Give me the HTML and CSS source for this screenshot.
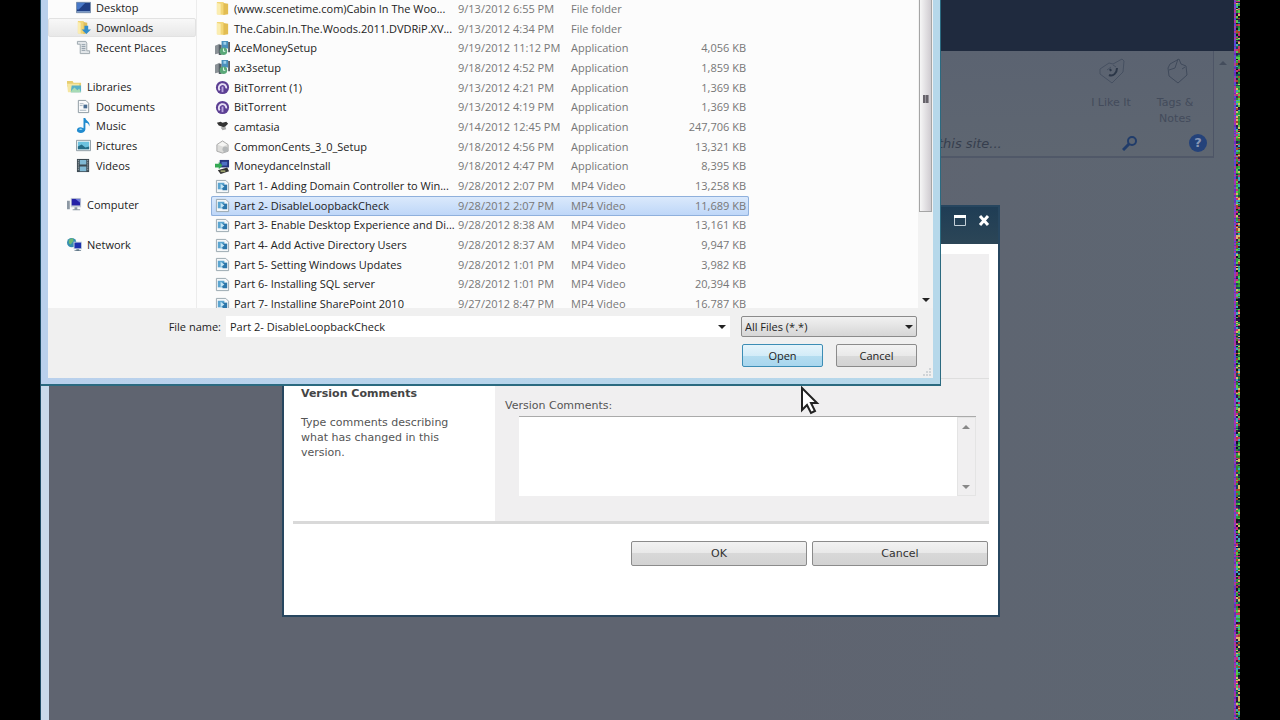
FILE: index.html
```html
<!DOCTYPE html>
<html lang="en">
<head>
  <meta charset="utf-8">
  <title>Upload Document</title>
  <link rel="stylesheet" href="styles.css">
</head>
<body>
  <svg class="sprites" aria-hidden="true">
    <symbol id="i-folder" viewBox="0 0 16 16"><path fill="#f3d778" d="M2 1h7l1 2v12l-8-1z"/><path fill="#e2bd52" d="M9 2l5 1v11l-5 1z"/><path fill="#fbedb0" d="M2 2l4 1v12l-4-1z"/></symbol>
    <symbol id="i-installer" viewBox="0 0 16 16"><path fill="#8a9196" d="M0 5l5-2v10l-5 1z"/><path fill="#4a90bd" d="M7 0h7v8H7z"/><path fill="#9fd0ea" d="M9 1h3v3H9z"/><path fill="#555e66" d="M4 4h3v11H4zM14 1h2v11h-2z"/><circle cx="9" cy="11" r="4" fill="#5aa878"/><path fill="none" stroke="#e8fff0" d="M9 8v3h2"/></symbol>
    <symbol id="i-bittorrent" viewBox="0 0 16 16"><circle cx="8" cy="8" r="7" fill="#5c3f93"/><path fill="none" stroke="#e6def4" stroke-width="2" d="M12 9a4 4 0 1 0-7 2"/><path fill="none" stroke="#b9a6dc" stroke-width="2" d="M8 7v6"/></symbol>
    <symbol id="i-camtasia" viewBox="0 0 16 16"><path fill="#333" d="M2 4l4-1 2 1 4-1 2 2-2 2-2 2-3-1-3-1z"/><path fill="#aaa" d="M6 9l5-1 1 3-4 1z"/></symbol>
    <symbol id="i-box" viewBox="0 0 16 16"><path fill="#dcdcda" stroke="#a9a9a7" d="M2 6l6-4 6 4v7l-6 2-6-2z"/><path fill="#f5f5f3" d="M3 6l5-3 5 3-5 2z"/><circle cx="11" cy="11" r="3" fill="#b5b8b9"/></symbol>
    <symbol id="i-money" viewBox="0 0 16 16"><path fill="#26367e" d="M5 1h10v8H5z"/><path fill="#4d70c4" d="M7 3h6v4H7z"/><path fill="#333" d="M3 12l10-3 2 4-9 3z"/><path fill="#34a853" d="M0 5h4V3l4 4-4 4V9H0z"/><path fill="#9ba16d" d="M6 12h5v2H6z"/></symbol>
    <symbol id="i-video" viewBox="0 0 16 16"><path fill="#f4f7f9" stroke="#98a5ae" d="M1.500 1.500h10l3 3v10h-13z"/><path fill="#5ba5d0" d="M3 4h7v7H3z"/><path fill="#2c76aa" d="M8 6h5v6H8z"/><path fill="#c5e5f4" d="M6 5l4 3-4 3z"/></symbol>
    <symbol id="i-desktop" viewBox="0 0 16 16"><path fill="#1f3f86" stroke="#7d92ad" d="M.5 2.500h15v11H.5z"/><path fill="#4778c8" d="M1 3h9L3 10H1z"/><path fill="#9bb9dd" d="M1 12h14v1H1z"/></symbol>
    <symbol id="i-downloads" viewBox="0 0 16 16"><path fill="#f1d676" d="M2 1h6l1 2v12l-7-1z"/><path fill="#dfbe5c" d="M8 2l4 1v11l-4 1z"/><path fill="#fbedb0" d="M2 2l3 1v12l-3-1z"/><path fill="#328ecb" d="M9 6h4v4h3l-5 5-5-5h3z"/></symbol>
    <symbol id="i-recent" viewBox="0 0 16 16"><path fill="#e2e6e9" stroke="#9ba5ac" d="M1.500 1.500h9l1 2v8h3v3h-10v-10h-3z"/><path stroke="#8b99a3" d="M6 5h4M6 7h4M6 9h4M6 11h4"/></symbol>
    <symbol id="i-libraries" viewBox="0 0 16 16"><path fill="#e7ce71" d="M0 2h6l1 2h8v4H0z"/><path fill="#f5e6a2" d="M0 5h13v9H1z"/><path fill="#58b0c8" d="M5 7h10v7H4z"/><path fill="#a7dbb5" d="M5 12l3-3 3 3 2-2 2 4H4z"/></symbol>
    <symbol id="i-documents" viewBox="0 0 16 16"><path fill="#fafbfc" stroke="#8b979f" d="M2.500 1.500h8l3 3v10h-11z"/><path stroke="#a4b4c0" d="M4 5h4M4 7h3M4 12h7"/><path fill="#4a6e93" d="M8 6h4v4H8z"/></symbol>
    <symbol id="i-music" viewBox="0 0 16 16"><path fill="#218bcf" d="M8 0h2c0 3 6 4 4 9 0-3-2-4-4-4v7c0 5-9 5-9 1 0-3 4-4 7-2z"/><path fill="#9bd7f5" d="M3 12c1-1 3-1 4 0-1 1-3 1-4 0z"/></symbol>
    <symbol id="i-pictures" viewBox="0 0 16 16"><path fill="#eef2f3" stroke="#8b9aa2" d="M.5 2.500h15v11H.5z"/><path fill="#6cc2df" d="M2 4h12v8H2z"/><path fill="#256c86" d="M2 9l4-2 4 3 4-1v3H2z"/></symbol>
    <symbol id="i-videos" viewBox="0 0 16 16"><path fill="#3d4a52" d="M1 1h13v14H1z"/><path fill="#80b9d4" d="M4 2h7v5H4zM4 9h7v5H4z"/><path stroke="#bec8ce" stroke-dasharray="1 1" d="M2.500 2v12M12.500 2v12"/></symbol>
    <symbol id="i-computer" viewBox="0 0 16 16"><path fill="#c7ced6" d="M4 1h11v10H4z"/><path fill="#2521a6" d="M5 2h9v7H5z"/><path fill="#6d78d6" d="M9 2h5v4z"/><path fill="#8d98a4" d="M0 4h3v9H0zM8 11h3v2h3v1H6v-1h2z"/></symbol>
    <symbol id="i-network" viewBox="0 0 16 16"><circle cx="5" cy="6" r="5" fill="#358eb2"/><path fill="#6eb974" d="M2 3l4-2 1 3-3 4-2-1z"/><path fill="#c2d0df" d="M7 5h9v8H7z"/><path fill="#1d31ae" d="M8 6h7v6H8z"/><path fill="#627889" d="M10 13h3v1h2v1H8v-1h2z"/></symbol>
  </svg>

  <div class="screen">
    <!-- SharePoint page, dimmed by the modal overlay -->
    <div class="site">
      <div class="site-top"></div>
      <div class="ribbon">
        <div class="ribbon-main">
          <div class="ribbon-actions">
            <button class="ribbon-button">
              <svg width="32" height="32" viewBox="0 0 32 32" fill="none" stroke="#465061"><path d="M5 14l9-6 4 1 9-5 2 2-1 11-11 11L5 19z"/><path d="M12 15l4-3M18 10l3 2"/><path stroke="#2c3748" stroke-width="2" d="M14 20c4 2 8-2 8-7M15 14l1 2"/></svg>
              I Like It
            </button>
            <button class="ribbon-button">
              <svg width="32" height="32" viewBox="0 0 32 32" fill="none" stroke="#404a5b"><path d="M9 13l2-4 9-5 2 5 5 2 1 9-9 8-9-7z"/><path d="M19 4l-3 9-6 2M26 12l-3 2"/></svg>
              Tags &amp; Notes
            </button>
          </div>
          <div class="site-search">
            <span class="search-text">this site...</span>
            <button class="search-go" aria-label="Search"><svg width="16" height="16" viewBox="0 0 16 16" fill="none" stroke="#203c6a" stroke-width="2"><circle cx="10" cy="6" r="4"/><path stroke-width="3" d="M7 9l-6 6"/></svg></button>
            <a class="help" href="#" aria-label="Help">?</a>
          </div>
        </div>
        <span class="page-up"></span>
      </div>
    </div>
    <canvas class="noise" id="noise" width="6" height="720"></canvas>

    <section class="upload">
      <header class="upload-title">
        <button aria-label="Maximize"><svg width="14" height="14" viewBox="0 0 14 14"><path fill="none" stroke="#c4d0d8" d="M1.500 1.500h11v10h-11z"/><path fill="#fff" d="M1 1h12v3H1z"/></svg></button>
        <button aria-label="Close"><svg width="14" height="14" viewBox="0 0 14 14"><path stroke="#fff" stroke-width="3" d="M3 2l8 9M11 2l-8 9"/></svg></button>
      </header>
      <div class="upload-body">
        <div class="form-row form-row-file"><div></div><div class="form-field"></div></div>
        <div class="form-row">
          <div class="form-help">
            <h3>Version Comments</h3>
            <p>Type comments describing what has changed in this version.</p>
          </div>
          <div class="form-field">
            <label for="comments">Version Comments:</label>
            <div class="comments-box">
              <textarea id="comments"></textarea>
              <div class="comments-scroll"><i class="arrow-up"></i><i class="arrow-down"></i></div>
            </div>
          </div>
        </div>
        <div class="upload-buttons">
          <button class="wide-button">OK</button>
          <button class="wide-button">Cancel</button>
        </div>
      </div>
    </section>

    <section class="file-dialog">
      <div class="dialog-inner">
        <div class="panes">
          <ul class="tree">
            <li class="sub"><svg><use href="#i-desktop"/></svg>Desktop</li>
            <li class="sub current"><svg><use href="#i-downloads"/></svg>Downloads</li>
            <li class="sub"><svg><use href="#i-recent"/></svg>Recent Places</li>
            <li></li>
            <li><svg><use href="#i-libraries"/></svg>Libraries</li>
            <li class="sub"><svg><use href="#i-documents"/></svg>Documents</li>
            <li class="sub"><svg><use href="#i-music"/></svg>Music</li>
            <li class="sub"><svg><use href="#i-pictures"/></svg>Pictures</li>
            <li class="sub"><svg><use href="#i-videos"/></svg>Videos</li>
            <li></li>
            <li><svg><use href="#i-computer"/></svg>Computer</li>
            <li></li>
            <li><svg><use href="#i-network"/></svg>Network</li>
          </ul>
          <div class="files">
            <table>
              <colgroup><col class="c-icon"><col class="c-name"><col class="c-date"><col class="c-type"><col class="c-size"></colgroup>
              <tbody>
                <tr><td><svg><use href="#i-folder"/></svg></td><td>(www.scenetime.com)Cabin In The Woo...</td><td>9/13/2012 6:55 PM</td><td>File folder</td><td></td></tr>
                <tr><td><svg><use href="#i-folder"/></svg></td><td>The.Cabin.In.The.Woods.2011.DVDRiP.XV...</td><td>9/13/2012 4:34 PM</td><td>File folder</td><td></td></tr>
                <tr><td><svg><use href="#i-installer"/></svg></td><td>AceMoneySetup</td><td>9/19/2012 11:12 PM</td><td>Application</td><td>4,056 KB</td></tr>
                <tr><td><svg><use href="#i-installer"/></svg></td><td>ax3setup</td><td>9/18/2012 4:52 PM</td><td>Application</td><td>1,859 KB</td></tr>
                <tr><td><svg><use href="#i-bittorrent"/></svg></td><td>BitTorrent (1)</td><td>9/13/2012 4:21 PM</td><td>Application</td><td>1,369 KB</td></tr>
                <tr><td><svg><use href="#i-bittorrent"/></svg></td><td>BitTorrent</td><td>9/13/2012 4:19 PM</td><td>Application</td><td>1,369 KB</td></tr>
                <tr><td><svg><use href="#i-camtasia"/></svg></td><td>camtasia</td><td>9/14/2012 12:45 PM</td><td>Application</td><td>247,706 KB</td></tr>
                <tr><td><svg><use href="#i-box"/></svg></td><td>CommonCents_3_0_Setup</td><td>9/18/2012 4:56 PM</td><td>Application</td><td>13,321 KB</td></tr>
                <tr><td><svg><use href="#i-money"/></svg></td><td>MoneydanceInstall</td><td>9/18/2012 4:47 PM</td><td>Application</td><td>8,395 KB</td></tr>
                <tr><td><svg><use href="#i-video"/></svg></td><td>Part 1- Adding Domain Controller to Win...</td><td>9/28/2012 2:07 PM</td><td>MP4 Video</td><td>13,258 KB</td></tr>
                <tr class="selected"><td><svg><use href="#i-video"/></svg></td><td>Part 2- DisableLoopbackCheck</td><td>9/28/2012 2:07 PM</td><td>MP4 Video</td><td>11,689 KB</td></tr>
                <tr><td><svg><use href="#i-video"/></svg></td><td>Part 3- Enable Desktop Experience and Di...</td><td>9/28/2012 8:38 AM</td><td>MP4 Video</td><td>13,161 KB</td></tr>
                <tr><td><svg><use href="#i-video"/></svg></td><td>Part 4- Add Active Directory Users</td><td>9/28/2012 8:37 AM</td><td>MP4 Video</td><td>9,947 KB</td></tr>
                <tr><td><svg><use href="#i-video"/></svg></td><td>Part 5- Setting Windows Updates</td><td>9/28/2012 1:01 PM</td><td>MP4 Video</td><td>3,982 KB</td></tr>
                <tr><td><svg><use href="#i-video"/></svg></td><td>Part 6- Installing SQL server</td><td>9/28/2012 1:01 PM</td><td>MP4 Video</td><td>20,394 KB</td></tr>
                <tr><td><svg><use href="#i-video"/></svg></td><td>Part 7- Installing SharePoint 2010</td><td>9/27/2012 8:47 PM</td><td>MP4 Video</td><td>16,787 KB</td></tr>
              </tbody>
            </table>
          </div>
          <div class="scrollbar"><div class="thumb"><i></i></div><i class="arrow-down"></i></div>
        </div>
        <div class="dialog-footer">
          <div class="footer-row">
            <label for="filename">File name:</label>
            <div class="filename-box">
              <input type="text" id="filename" value="Part 2- DisableLoopbackCheck">
              <i class="arrow-down"></i>
            </div>
            <div class="filter-box">
              <select aria-label="File type"><option>All Files (*.*)</option></select>
              <i class="arrow-down"></i>
            </div>
          </div>
          <div class="footer-row footer-buttons">
            <button class="dialog-button default">Open</button>
            <button class="dialog-button">Cancel</button>
          </div>
        </div>
        <svg class="grip" width="10" height="10" viewBox="0 0 10 10" fill="#d0d4d7"><path d="M7 1h2v2H7zM7 4h2v2H7zM7 7h2v2H7zM4 4h2v2H4zM4 7h2v2H4zM1 7h2v2H1z"/></svg>
      </div>
    </section>

    <svg class="cursor" width="20" height="30" viewBox="0 0 20 30"><path fill="#fff" stroke="#222" stroke-width="2" d="M2 2v22l5-5 4 8 4-2-4-8h6z"/></svg>
  </div>

  <script>
    // static on the right edge of the capture
    var canvas = document.getElementById('noise');
    var ctx = canvas.getContext('2d');
    var edge = ['#6a30c0', '#a030b8', '#5a48d8', '#b03898', '#8040c8'];
    var colors = ['#2fa040', '#101820', '#58c848', '#c83070', '#184858', '#d8b868', '#30882a', '#301848', '#38a8b8', '#a84828'];
    var seed = 7;
    function next(n) {
      seed = (seed * 1103 + 12347) % 65521;
      return Math.floor(seed / 65521 * n);
    }
    for (var y = 0; y < 720; y += 1 + next(2)) {
      for (var x = 0; x < 6; x += 2) {
        ctx.fillStyle = x < 2 ? edge[next(edge.length)] : colors[next(colors.length)];
        ctx.fillRect(x, y, 2, 2);
      }
    }
  </script>
</body>
</html>
```
FILE: styles.css
```css
* {
  box-sizing: border-box;
}

body {
  margin: 0;
  background: #000;
  font-family: "Open Sans", "Noto Sans", sans-serif;
  font-size: 11px;
  color: #222;
}

button, input, select, textarea {
  font: inherit;
  color: inherit;
  margin: 0;
}

button {
  padding: 0;
}

.sprites {
  display: none;
}

.screen {
  position: relative;
  height: 100vh;
  margin: 0 40px;
  overflow: hidden;
  display: flex;
  border-left: 1px solid #1d4a63;
}

/* dimmed site */
.site {
  flex: 1;
  border-left: 8px solid #c9d9ea;
  background: linear-gradient(90deg, #5f6470 60%, #5d6672);
}

.site-top {
  height: 51px;
  background: #1f2a3e;
}

.ribbon {
  display: flex;
  font-family: "DejaVu Sans", sans-serif;
  color: #434b5b;
}

.ribbon-main {
  flex: 1;
  height: 107px;
  display: flex;
  flex-direction: column;
  justify-content: space-between;
  background: linear-gradient(#5b6371, #5e6671);
  border-right: 1px solid #4d5566;
  border-bottom: 2px solid #505868;
}

.ribbon-actions {
  display: flex;
  justify-content: flex-end;
  align-items: flex-start;
  gap: 12px;
  padding: 4px 12px 0 0;
}

.ribbon-button {
  width: 52px;
  display: flex;
  flex-direction: column;
  align-items: center;
  gap: 8px;
  border: 0;
  background: none;
  line-height: 16px;
}

.site-search {
  display: flex;
  justify-content: flex-end;
  align-items: center;
  padding: 0 6px 4px 0;
}

.search-text {
  width: 184px;
  font-size: 13px;
  font-style: italic;
  color: #363e4d;
}

.search-go {
  height: 16px;
  border: 0;
  background: none;
}

.help {
  width: 18px;
  height: 18px;
  margin-left: 51px;
  border-radius: 50%;
  background: #24427a;
  color: #8796b4;
  font-size: 13px;
  font-weight: bold;
  line-height: 18px;
  text-align: center;
  text-decoration: none;
}

.page-up {
  width: 20px;
  padding: 10px 5px;
}

.page-up::before {
  content: "";
  display: block;
  width: 0;
  border: 4px solid transparent;
  border-top: 0;
  border-bottom-color: #444d5c;
}

.noise {
  flex: none;
}

/* arrows */
.arrow-up, .arrow-down {
  width: 0;
  border: 4px solid transparent;
}

.arrow-up {
  border-top: 0;
  border-bottom-color: #888;
}

.arrow-down {
  border-bottom: 0;
  border-top-color: #222;
}

/* upload document modal */
.upload {
  position: absolute;
  left: 241px;
  top: 205px;
  width: 718px;
  height: 412px;
  border: 2px solid #27465f;
  background: #fff;
  font-family: "DejaVu Sans", sans-serif;
  color: #555;
}

.upload-title {
  height: 37px;
  display: flex;
  justify-content: flex-end;
  align-items: center;
  gap: 10px;
  padding: 0 7px 10px 0;
  background: linear-gradient(#1f3d55, #2c4657);
}

.upload-title button {
  height: 14px;
  border: 0;
  background: none;
}

.upload-body {
  padding: 10px 9px;
}

.form-row {
  display: grid;
  grid-template-columns: 202px 1fr;
  height: 145px;
  border-bottom: 3px solid #d9d9d9;
}

.form-row-file {
  height: 125px;
  border-bottom: 1px solid #dedede;
}

.form-help {
  padding: 8px 40px 0 8px;
}

.form-help h3 {
  margin: 0 0 14px;
  font-size: 11px;
  line-height: 14px;
  white-space: nowrap;
  color: #444;
}

.form-help p {
  margin: 0;
  line-height: 15px;
}

.form-field {
  background: #f0eff0;
  padding: 18px 13px 0 10px;
}

.form-field label {
  display: block;
  line-height: 18px;
}

.comments-box {
  height: 80px;
  margin: 1px 0 0 14px;
  display: flex;
  border-top: 1px solid #aaa;
}

.comments-box textarea {
  flex: 1;
  border: 0;
  resize: none;
  background: #fff;
}

.comments-scroll {
  width: 19px;
  display: flex;
  flex-direction: column;
  justify-content: space-between;
  align-items: center;
  padding: 7px 2px 6px 0;
  border: 1px solid #e4e4e4;
}

.comments-scroll .arrow-down {
  border-top-color: #888;
}

.upload-buttons {
  display: flex;
  justify-content: flex-end;
  gap: 5px;
  padding: 17px 1px 0 0;
}

.wide-button {
  width: 176px;
  height: 25px;
  border: 1px solid #8b8b8b;
  border-radius: 2px;
  background: linear-gradient(#f2f2f2, #e8e8e8 50%, #d8d8d8 50%, #d2d2d2);
  color: #333;
}

/* open file dialog */
.file-dialog {
  position: absolute;
  left: 0;
  top: 0;
  width: 900px;
  height: 386px;
  padding: 0 7px 6px 7px;
  border: 1px solid #2b6a80;
  border-top: 0;
  border-left: 0;
  border-bottom-width: 2px;
  background: linear-gradient(90deg, #b9d0ec, #b6d8ea);
}

.dialog-inner {
  position: relative;
  height: 100%;
  display: flex;
  flex-direction: column;
  background: #f0f0f0;
}

.panes {
  height: 308px;
  display: flex;
  overflow: hidden;
  background: #fcfcfc;
}

.tree {
  width: 148px;
  height: 256px;
  margin: -2px 0 0;
  padding: 0;
  display: grid;
  grid-template-rows: repeat(13, 1fr);
  list-style: none;
}

.tree li {
  display: flex;
  align-items: center;
  gap: 5px;
  padding-left: 19px;
}

.tree .sub {
  padding-left: 28px;
}

.tree .current {
  border: 1px solid #e2e2e2;
  border-radius: 2px;
  background: linear-gradient(#f8f8f8, #e8e8e8);
  padding-left: 27px;
}

.tree svg, .files svg {
  flex: none;
  display: block;
  width: 15px;
  height: 15px;
}

.files {
  flex: 1;
  padding-left: 14px;
  border-left: 1px solid #ececec;
}

.files table {
  width: 538px;
  height: 315px;
  margin-top: -1px;
  table-layout: fixed;
  border-spacing: 0;
  line-height: 16px;
}

.files td {
  padding: 0;
  white-space: nowrap;
  color: #777;
}

.files td:first-child {
  padding-left: 4px;
}

.files td:nth-child(2) {
  color: #222;
}

.files td:last-child {
  padding-right: 3px;
  text-align: right;
}

.c-icon {
  width: 23px;
}

.c-name {
  width: 224px;
}

.c-date {
  width: 113px;
}

.c-type {
  width: 100px;
}

.files .selected {
  background: linear-gradient(#dceafc, #bdd6f8);
  outline: 1px solid #8fb0dc;
  outline-offset: -1px;
  border-radius: 2px;
}

.scrollbar {
  width: 15px;
  display: flex;
  flex-direction: column;
  align-items: center;
  justify-content: space-between;
  padding-bottom: 6px;
  background: #f2f2f2;
}

.thumb {
  width: 13px;
  height: 212px;
  display: flex;
  justify-content: center;
  padding-top: 95px;
  border: 1px solid #a5a5a5;
  border-top: 0;
  background: linear-gradient(90deg, #f6f6f6, #cfcbd0);
}

.thumb i {
  width: 6px;
  height: 8px;
  background: repeating-linear-gradient(90deg, #66636a 0 2px, #96939a 2px 3px);
}

.dialog-footer {
  padding: 8px 16px 0 0;
}

.footer-row {
  display: flex;
  justify-content: flex-end;
  align-items: center;
}

.footer-row label {
  margin-right: 5px;
}

.filename-box {
  width: 504px;
  height: 21px;
  display: flex;
  align-items: center;
  padding-right: 4px;
  background: #fff;
}

.filename-box input {
  flex: 1;
  border: 0;
  padding: 0 4px;
  background: none;
  outline: none;
}

.filter-box {
  position: relative;
  width: 176px;
  margin-left: 11px;
}

.filter-box select {
  width: 100%;
  height: 21px;
  display: block;
  appearance: none;
  border: 1px solid #8b8b8b;
  border-radius: 2px;
  padding: 0 3px;
  background: linear-gradient(#f1f1f1, #d6d6d6);
}

.filter-box .arrow-down {
  position: absolute;
  right: 4px;
  top: 9px;
}

.footer-buttons {
  gap: 13px;
  padding-top: 7px;
}

.dialog-button {
  width: 81px;
  height: 23px;
  border: 1px solid #8b8b8b;
  border-radius: 2px;
  background: linear-gradient(#f3f3f3, #e9e9e9 50%, #dadada 50%, #d3d3d3);
}

.dialog-button.default {
  border-color: #3c8db5;
  background: linear-gradient(#e5f4fb, #d3ecf8 50%, #b5ddf0 50%, #a8d6ee);
}

.grip {
  position: absolute;
  right: 1px;
  bottom: 1px;
}

.cursor {
  position: absolute;
  left: 759px;
  top: 386px;
}
```
